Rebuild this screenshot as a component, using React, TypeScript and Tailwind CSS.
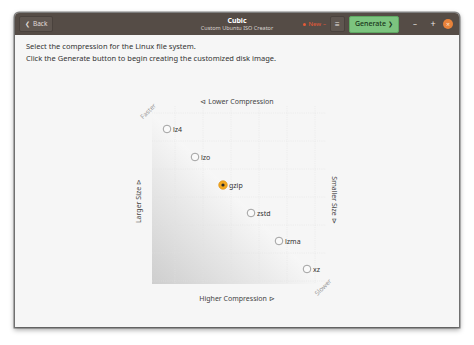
import React from "react";

const points = [
  { name: "lz4", x: 167, y: 129 },
  { name: "lzo", x: 195, y: 157 },
  { name: "gzip", x: 223, y: 185, selected: true },
  { name: "zstd", x: 251, y: 213 },
  { name: "lzma", x: 279, y: 241 },
  { name: "xz", x: 307, y: 269 },
];

const gridX = [175, 203, 231, 259, 287, 315];
const gridY = [113, 141, 169, 197, 225, 253, 281];

function CompressionChart() {
  return (
    <svg width={444} height={215} viewBox="15 90 444 215" className="block">
      <defs>
        <linearGradient id="tri" gradientUnits="userSpaceOnUse" x1="152" y1="284" x2="238" y2="198">
          <stop offset="0" stopColor="#cecece" />
          <stop offset="1" stopColor="#f7f7f7" />
        </linearGradient>
      </defs>

      <polygon points="152,112 152,284 324,284" fill="url(#tri)" />

      {gridX.map((x) => (
        <line key={"vx" + x} x1={x} y1={106} x2={x} y2={284} stroke="#e2e2e2" strokeWidth={0.5} strokeDasharray="1 1.2" />
      ))}
      {gridY.map((y) => (
        <line key={"hy" + y} x1={152} y1={y} x2={326} y2={y} stroke="#e2e2e2" strokeWidth={0.5} strokeDasharray="1 1.2" />
      ))}

      <text x={237} y={101} fontSize={7} fill="#444" textAnchor="middle" dominantBaseline="central">
        ⊲  Lower Compression
      </text>
      <text x={237} y={298} fontSize={7} fill="#444" textAnchor="middle" dominantBaseline="central">
        Higher Compression  ⊳
      </text>
      <text x={138} y={201} fontSize={7} fill="#444" textAnchor="middle" dominantBaseline="central" transform="rotate(-90 138 201)">
        Larger Size  ⊳
      </text>
      <text x={334} y={200} fontSize={7} fill="#444" textAnchor="middle" dominantBaseline="central" transform="rotate(90 334 200)">
        Smaller Size  ⊳
      </text>
      <text x={148} y={111} fontSize={6.5} fill="#9a9a9a" textAnchor="middle" dominantBaseline="central" transform="rotate(-45 148 111)">
        Faster
      </text>
      <text x={323} y={287} fontSize={6.5} fill="#9a9a9a" textAnchor="middle" dominantBaseline="central" transform="rotate(-45 323 287)">
        Slower
      </text>

      {points.map((p) => (
        <g key={p.name}>
          {p.selected ? (
            <>
              <circle cx={p.x} cy={p.y} r={4.3} fill="#f2a81d" stroke="#d88a10" strokeWidth={0.6} />
              <circle cx={p.x} cy={p.y} r={1.6} fill="#2a2a2a" />
            </>
          ) : (
            <circle cx={p.x} cy={p.y} r={3.8} fill="#fafafa" stroke="#8a8a8a" strokeWidth={0.8} />
          )}
          <text x={p.x + 6} y={p.y + 0.5} fontSize={7} fill="#333" dominantBaseline="central">
            {p.name}
          </text>
        </g>
      ))}
    </svg>
  );
}

function HeaderBar() {
  return (
    <div className="grid grid-cols-[1fr_auto_1fr] items-center h-[22px] bg-[#554c46] rounded-t-[4px] px-[4px]">
      <div className="flex items-center">
        <div className="flex items-center gap-[3px] h-[16px] px-[5px] rounded-[2px] bg-[#5f5650] border border-[#4a423d] text-[#e0dcd8] text-[6.5px]">
          <span className="text-[6px]">❮</span>
          <span>Back</span>
        </div>
      </div>
      <div className="flex flex-col items-center">
        <span className="text-[7px] leading-[8px] font-bold text-white">Cubic</span>
        <span className="text-[5.5px] leading-[7px] text-[#d8d3cf]">Custom Ubuntu ISO Creator</span>
      </div>
      <div className="flex items-center justify-end">
        <div className="flex items-center gap-[2px] text-[6px] text-[#e65a38] mr-[4px]">
          <span className="w-[3px] h-[3px] rounded-full bg-[#e65a38]" />
          <span>New</span>
          <span>–</span>
        </div>
        <div className="flex items-center justify-center w-[15px] h-[16px] rounded-[2px] bg-[#5f5650] border border-[#4a423d] text-[#e8e4e0] text-[8px] mr-[4px]">
          ≡
        </div>
        <div className="flex items-center gap-[2px] h-[17px] px-[5px] rounded-[2px] bg-[#7cc47f] border border-[#5ea862] text-[#183318] text-[7px] font-medium">
          <span>Generate</span>
          <span className="text-[6px]">❯</span>
        </div>
        <span className="text-[#d8d3cf] text-[8px] ml-[11px] w-[10px] text-center">–</span>
        <span className="text-[#e8e4e0] text-[9px] ml-[8px] w-[10px] text-center">+</span>
        <div className="flex items-center justify-center w-[10px] h-[10px] rounded-full bg-[#e8823a] text-[#fbe3cf] text-[7px] leading-none ml-[5px] mr-[2px]">
          ×
        </div>
      </div>
    </div>
  );
}

export default function App() {
  return (
    <div className="w-[474px] h-[345px] bg-white pt-[13px] pl-[15px] font-['Noto_Sans',sans-serif]">
      <div className="w-[444px] h-[314px] flex flex-col rounded-t-[4px] shadow-[0_0_0_1.5px_rgba(0,0,0,0.45),0_2px_5px_1px_rgba(0,0,0,0.35)]">
        <HeaderBar />
        <div className="flex-1 bg-[#f6f6f6] flex flex-col">
          <div className="pl-[11px] pt-[5px] text-[7.5px] leading-[12px] text-[#333]">
            <p>Select the compression for the Linux file system.</p>
            <p>Click the Generate button to begin creating the customized disk image.</p>
          </div>
          <div className="mt-[26px]">
            <CompressionChart />
          </div>
        </div>
      </div>
    </div>
  );
}
